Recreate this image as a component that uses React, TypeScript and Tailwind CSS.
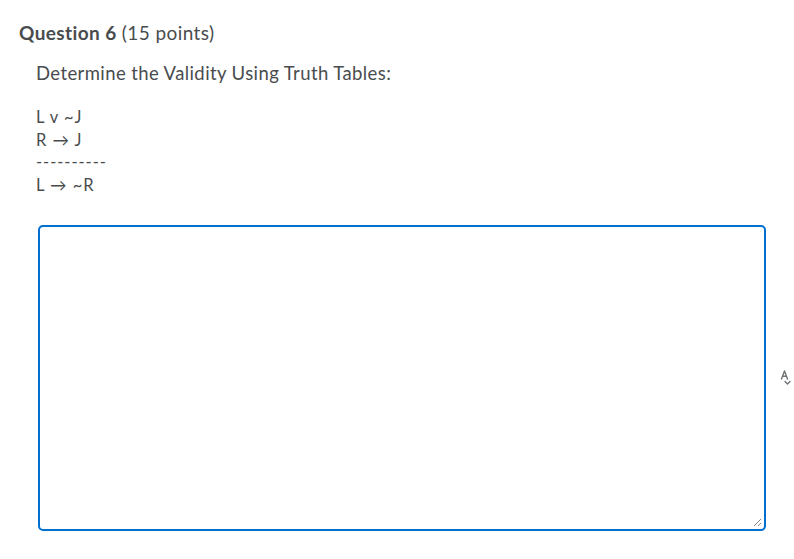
import React from "react";

export default function App() {
  const font = { fontFamily: "Lato, 'Noto Sans', sans-serif" };
  return (
    <div className="w-[794px] h-[559px] bg-white text-[#494c4e]" style={font}>
      <div className="pl-[19px] pt-[21px]">
        <h2 className="text-[19px] leading-[24px] tracking-[0.4px]">
          <span className="font-bold">Question 6</span> (15 points)
        </h2>
      </div>
      <div className="pl-[36px] pt-[16px] text-[18.5px] leading-[24px] tracking-[0.4px]">
        Determine the Validity Using Truth Tables:
      </div>
      <div className="pl-[36px] pt-[21px] text-[16.5px] leading-[22.7px] tracking-[0.95px]">
        <div>L v ~J</div>
        <div>R → J</div>
        <div>----------</div>
        <div>L → ~R</div>
      </div>
      <div className="flex items-center pl-[38px] pt-[28px]">
        <div className="relative w-[728px] h-[306px] border-2 border-[#006fcf] rounded-[5px] bg-white">
          <svg
            className="absolute right-[2px] bottom-[2px]"
            width="9"
            height="9"
            viewBox="0 0 9 9"
          >
            <path d="M8 1L1 8M8 5L5 8" stroke="#888" strokeWidth="1" />
          </svg>
        </div>
        <svg
          className="ml-[14px]"
          width="12"
          height="18"
          viewBox="0 0 12 18"
          fill="none"
          stroke="#6e7376"
          strokeWidth="1.4"
          strokeLinecap="round"
          strokeLinejoin="round"
        >
          <path d="M1.5 10L4.5 2L7.5 10M2.6 7.2H6.4" />
          <path d="M5 12.5L7.5 15L10 12.5" />
        </svg>
      </div>
    </div>
  );
}
